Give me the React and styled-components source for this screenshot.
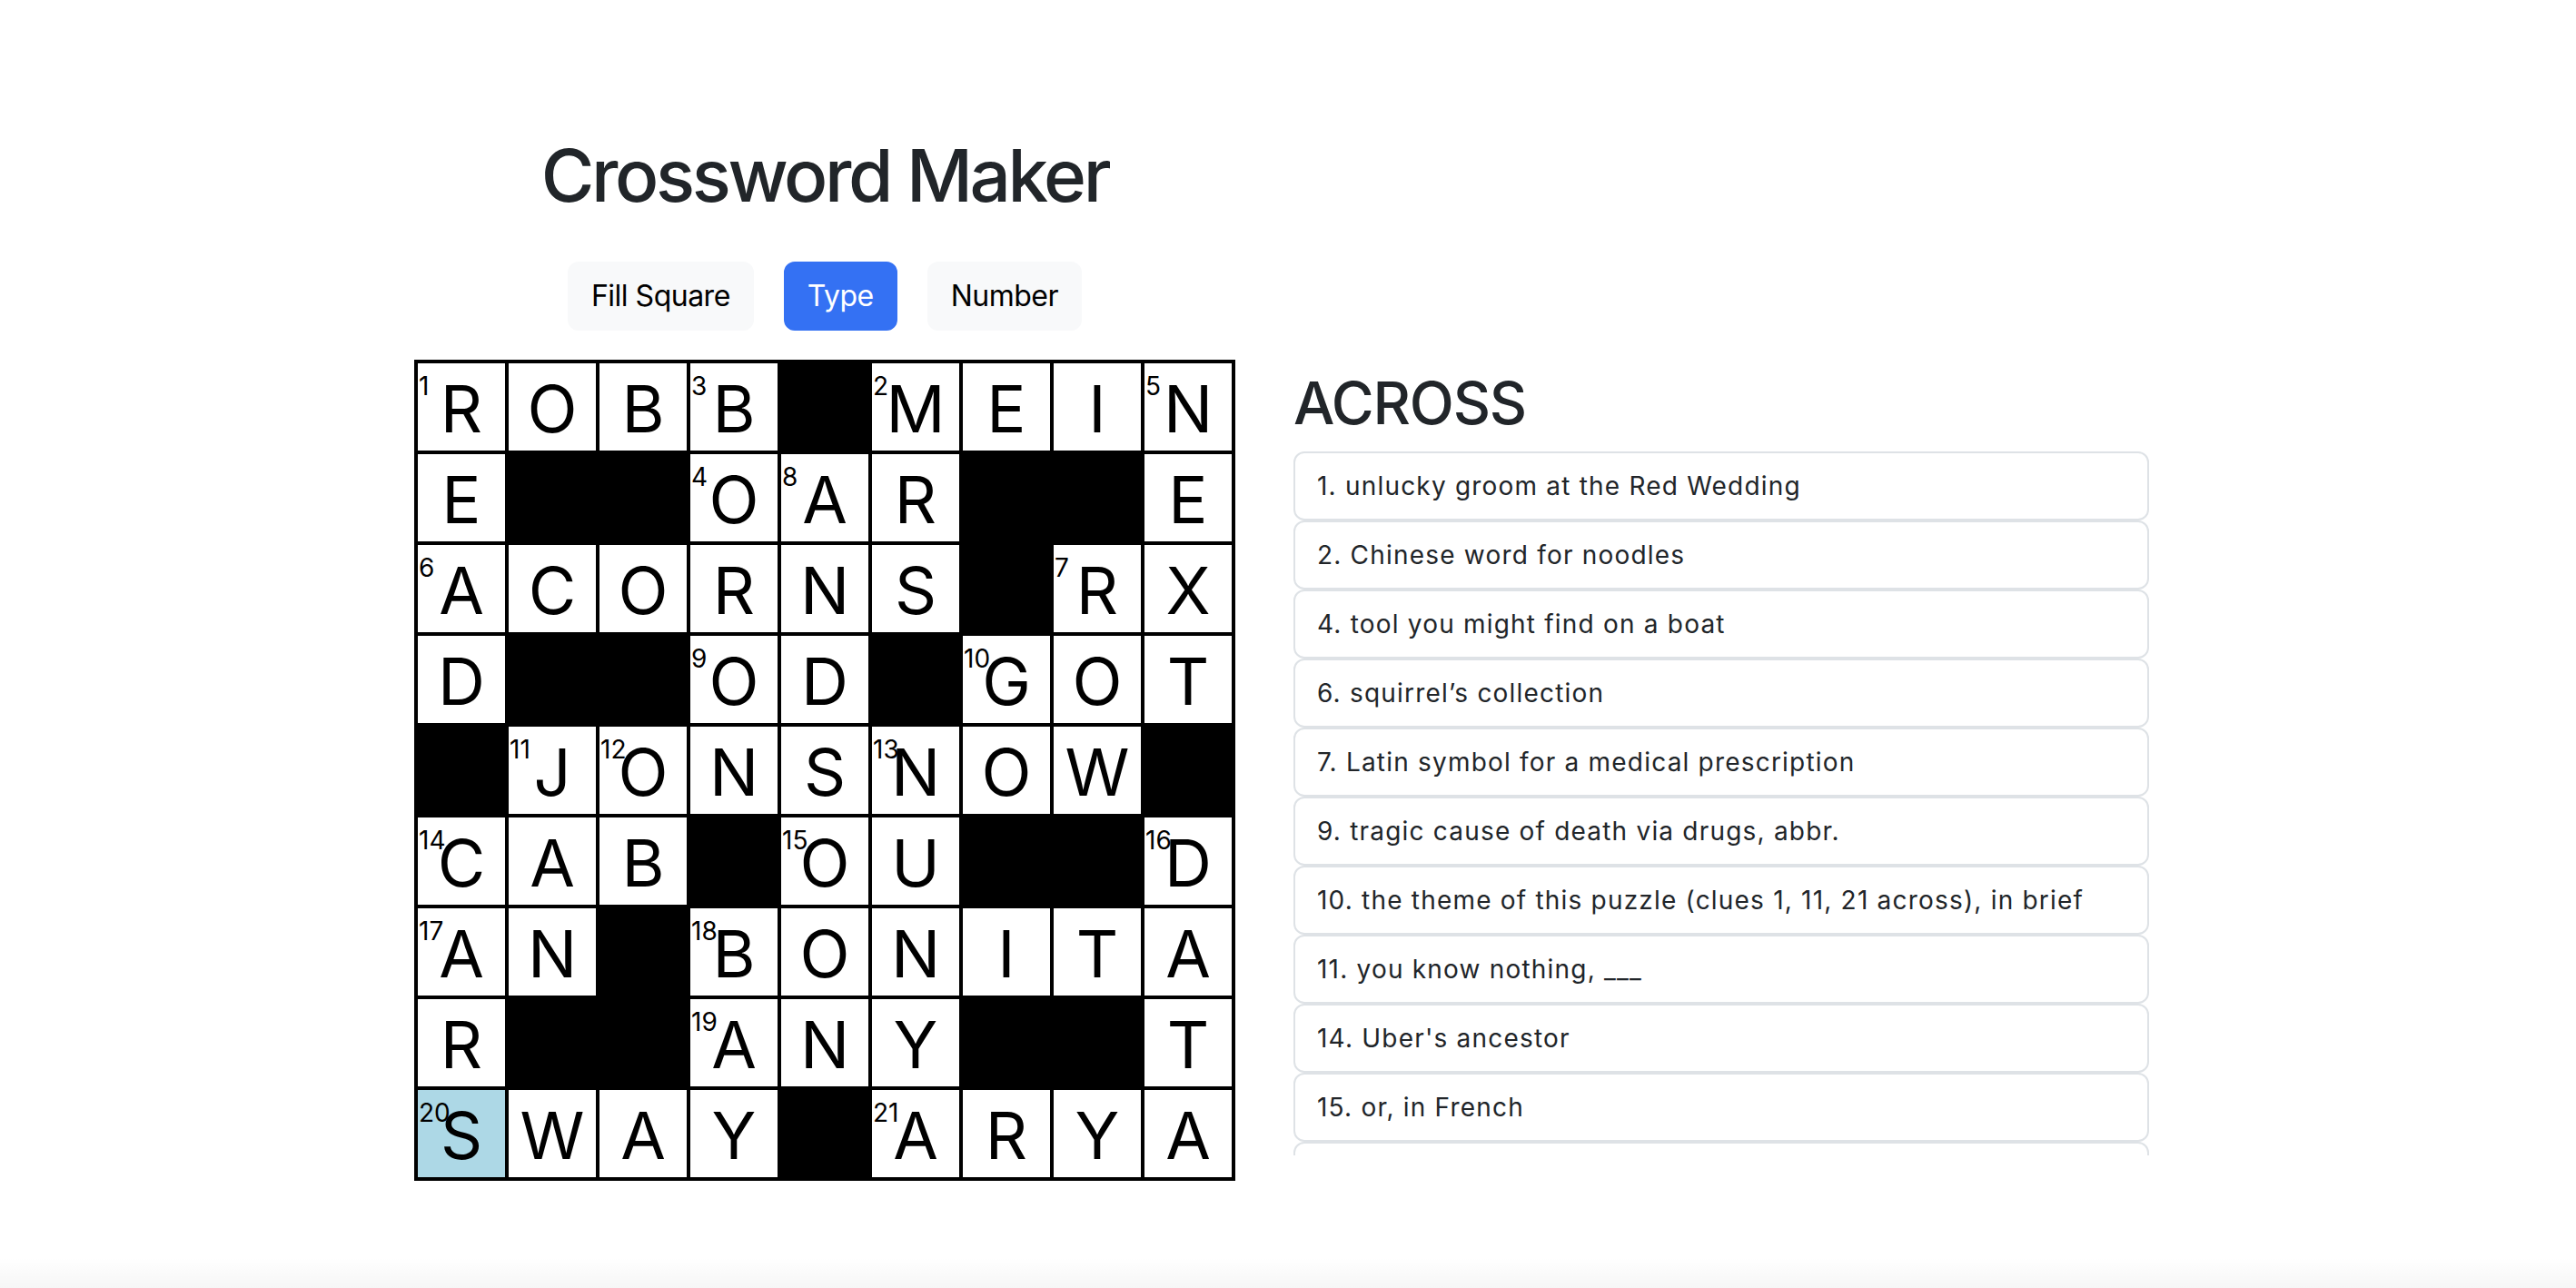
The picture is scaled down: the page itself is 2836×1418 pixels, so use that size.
import React from "react";
import styled, { createGlobalStyle } from "styled-components";

const GlobalStyle = createGlobalStyle`
  html, body {
    margin: 0;
    padding: 0;
    background: #fff;
  }
  body {
    font-family: "Inter", "Liberation Sans", sans-serif;
    color: #212529;
  }
  * {
    box-sizing: border-box;
  }
`;

const Page = styled.div`
  min-height: 100vh;
  display: flex;
  flex-direction: column;
`;

const Layout = styled.main`
  display: grid;
  grid-template-columns: 904px 942px;
  column-gap: 64px;
  padding: 145px 0 0 456px;
`;

const Header = styled.header`
  grid-column: 1 / 2;
  text-align: center;
`;

const Title = styled.h1`
  margin: 0 0 16px;
  font-size: 80px;
  font-weight: 500;
  line-height: 1.2;
  letter-spacing: -3.4px;
`;

const Toolbar = styled.div`
  display: flex;
  justify-content: center;
  gap: 33px;
  margin: 47px 0 32px;
`;

const ModeButton = styled.button`
  font-family: inherit;
  font-size: 32px;
  line-height: 48px;
  letter-spacing: -0.5px;
  padding: 12px 24px;
  border-radius: 12px;
  border: 2px solid ${(p) => (p.$active ? "#3471f3" : "#f8f9fa")};
  background: ${(p) => (p.$active ? "#3471f3" : "#f8f9fa")};
  color: ${(p) => (p.$active ? "#fff" : "#000")};
  cursor: pointer;
`;

const Board = styled.div`
  grid-column: 1 / 2;
  display: grid;
  grid-template-columns: repeat(9, 100px);
  grid-auto-rows: 100px;
  width: 904px;
  border: 2px solid #000;
`;

const Cell = styled.div`
  position: relative;
  display: flex;
  align-items: center;
  justify-content: center;
  padding-top: 4px;
  border: 2px solid #000;
  background: ${(p) => (p.$block ? "#000" : p.$selected ? "#add8e6" : "#fff")};
  font-size: 72px;
  line-height: 1;
  color: #000;
`;

const CellNumber = styled.span`
  position: absolute;
  top: 4px;
  left: 1px;
  font-size: 28px;
  line-height: 42px;
`;

const CluePanel = styled.section`
  grid-column: 2 / 3;
  grid-row: 2 / 4;
`;

const PanelTitle = styled.h2`
  margin: 10px 0 14px;
  font-size: 64px;
  font-weight: 500;
  line-height: 1.2;
  letter-spacing: -1.2px;
`;

const ClueList = styled.ul`
  list-style: none;
  margin: 0;
  padding: 0;
  height: 775px;
  overflow-y: auto;
  scrollbar-width: none;
`;

const ClueItem = styled.li`
  padding: 15px 24px;
  border: 2px solid #dee2e6;
  border-radius: 12px;
  font-size: 28px;
  line-height: 42px;
  letter-spacing: 1.2px;
  color: #212529;
`;

const BottomShade = styled.div`
  margin-top: auto;
  height: 34px;
  background: linear-gradient(to bottom, rgba(0, 0, 0, 0), rgba(0, 0, 0, 0.035));
`;

// "#" = black square, digits before a letter = clue number
const rows = [
  ["1R", "O", "B", "3B", "#", "2M", "E", "I", "5N"],
  ["E", "#", "#", "4O", "8A", "R", "#", "#", "E"],
  ["6A", "C", "O", "R", "N", "S", "#", "7R", "X"],
  ["D", "#", "#", "9O", "D", "#", "10G", "O", "T"],
  ["#", "11J", "12O", "N", "S", "13N", "O", "W", "#"],
  ["14C", "A", "B", "#", "15O", "U", "#", "#", "16D"],
  ["17A", "N", "#", "18B", "O", "N", "I", "T", "A"],
  ["R", "#", "#", "19A", "N", "Y", "#", "#", "T"],
  ["20S", "W", "A", "Y", "#", "21A", "R", "Y", "A"],
];

const across = [
  "1. unlucky groom at the Red Wedding",
  "2. Chinese word for noodles",
  "4. tool you might find on a boat",
  "6. squirrel\u2019s collection",
  "7. Latin symbol for a medical prescription",
  "9. tragic cause of death via drugs, abbr.",
  "10. the theme of this puzzle (clues 1, 11, 21 across), in brief",
  "11. you know nothing, ___",
  "14. Uber's ancestor",
  "15. or, in French",
  "17. indefinite article",
  "18. pretty, in Spanish",
  "19. ___ way you slice it",
  "20. to influence",
  "21. the youngest Stark daughter",
];

const modes = ["Fill Square", "Type", "Number"];

const App = () => {
  return (
    <Page>
      <GlobalStyle />
      <Layout>
        <Header>
          <Title>Crossword Maker</Title>
          <Toolbar>
            {modes.map((m) => (
              <ModeButton key={m} $active={m === "Type"}>
                {m}
              </ModeButton>
            ))}
          </Toolbar>
        </Header>
        <Board>
          {rows.map((row, r) =>
            row.map((val, c) => {
              if (val === "#") return <Cell key={`${r}-${c}`} $block />;
              const num = val.match(/^\d+/);
              const letter = val.replace(/^\d+/, "");
              return (
                <Cell key={`${r}-${c}`} $selected={r === 8 && c === 0}>
                  {num && <CellNumber>{num[0]}</CellNumber>}
                  {letter}
                </Cell>
              );
            })
          )}
        </Board>
        <CluePanel>
          <PanelTitle>ACROSS</PanelTitle>
          <ClueList>
            {across.map((clue) => (
              <ClueItem key={clue}>{clue}</ClueItem>
            ))}
          </ClueList>
        </CluePanel>
      </Layout>
      <BottomShade />
    </Page>
  );
};

export default App;
